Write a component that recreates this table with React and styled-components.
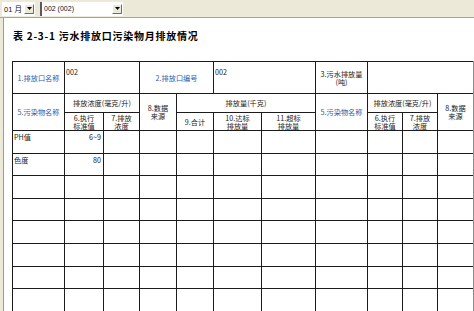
import React from "react";
import styled, { createGlobalStyle } from "styled-components";

const Global = createGlobalStyle`
  html, body { margin: 0; padding: 0; overflow: hidden; background: #ece9d8; }
  body { font-family: "Noto Sans CJK SC", "Noto Sans", sans-serif; }
`;

const Page = styled.div`
  width: 474px;
  height: 311px;
  display: flex;
  flex-direction: column;
  overflow: hidden;
`;

const Toolbar = styled.div`
  height: 17px;
  flex: 0 0 17px;
  background: #ece9d8;
  border-bottom: 1px solid #a9a794;
  display: flex;
  align-items: center;
  gap: 5px;
  padding-left: 2px;
`;

const Field = styled.div`
  width: ${(p) => p.$w}px;
  height: 14px;
  box-sizing: border-box;
  background: #fff;
  display: flex;
  align-items: center;
  justify-content: space-between;
  padding: 0 1px 0 2px;
  border-left: ${(p) => (p.$bar ? "2px solid #5a5a5a" : "none")};
  font-family: "Liberation Sans", "Noto Sans CJK SC", sans-serif;
  font-size: 7px;
  color: #111;
`;

const FieldText = styled.span`
  white-space: pre;
  font-size: ${(p) => p.$size || 7}px;
`;

const DropBtn = styled.div`
  width: 10px;
  height: 10px;
  box-sizing: border-box;
  background: #ece9d8;
  border: 1px solid;
  border-color: #fff #716f64 #716f64 #fff;
  display: flex;
  align-items: center;
  justify-content: center;
`;

const Workspace = styled.div`
  flex: 1;
  display: flex;
  background: #ece9d8;
  padding-left: 3px;
  min-height: 0;
`;

const Sheet = styled.div`
  flex: 1;
  background: #fff;
  border-left: 1px solid #9a9a9a;
  padding-left: 8px;
  overflow: hidden;
`;

const Title = styled.h1`
  margin: 12px 0 19px 1px;
  font-size: 10px;
  line-height: 12px;
  letter-spacing: 0.75px;
  font-weight: bold;
  color: #000;
  font-family: "Noto Sans CJK SC", sans-serif;
  white-space: pre;
`;

const Grid = styled.div`
  display: grid;
  width: max-content;
  grid-template-columns: 51px 38px 35px 36px 36px 47px 53px 51px 34px 34px 35px;
  grid-template-rows: 31px 18px 17px 22px 21px 22px 21px 22px 22px 21px 22px 22px;
  gap: 1px;
  background: #1c1c1c;
  padding: 1px 0 1px 1px;
  border-right: 1px solid #8c8c8c;
`;

const Cell = styled.div`
  background: #fff;
  grid-column: ${(p) => p.$col || "auto"};
  grid-row: ${(p) => p.$row || "auto"};
  display: flex;
  flex-direction: column;
  justify-content: ${(p) => (p.$top ? "flex-start" : "center")};
  align-items: ${(p) =>
    p.$align === "right" ? "flex-end" : p.$align === "left" ? "flex-start" : "center"};
  text-align: ${(p) => p.$align || "center"};
  padding: ${(p) => p.$pad || "0"};
  font-family: "Noto Sans CJK SC", sans-serif;
  font-size: 7.2px;
  line-height: 8px;
  color: ${(p) => (p.$blue ? "#2d5ca8" : "#1a1a1a")};
  white-space: nowrap;
  overflow: hidden;
`;

const Arrow = () => (
  <svg width="5" height="3" viewBox="0 0 5 3">
    <path d="M0 0h5L2.5 3z" fill="#000" />
  </svg>
);

const dataRows = [
  ["PH值", "6~9"],
  ["色度", "80"],
  ["", ""],
  ["", ""],
  ["", ""],
  ["", ""],
  ["", ""],
  ["", ""],
  ["", ""],
];

export default function App() {
  return (
    <Page>
      <Global />
      <Toolbar>
        <Field $w={33}>
          <FieldText $size={7.5}>01 月</FieldText>
          <DropBtn>
            <Arrow />
          </DropBtn>
        </Field>
        <Field $w={83} $bar>
          <FieldText>002 (002)</FieldText>
          <DropBtn>
            <Arrow />
          </DropBtn>
        </Field>
      </Toolbar>
      <Workspace>
        <Sheet>
          <Title>表 2-3-1 污水排放口污染物月排放情况</Title>
          <Grid>
            <Cell $blue>1.排放口名称</Cell>
            <Cell $col="span 2" $top $align="left" $pad="6px 0 0 1px">002</Cell>
            <Cell $col="span 2" $blue>2.排放口编号</Cell>
            <Cell $col="span 2" $top $align="left" $pad="6px 0 0 1px">002</Cell>
            <Cell>3.污水排放量<br />(吨)</Cell>
            <Cell $col="span 3" />

            <Cell $row="span 2" $blue>5.污染物名称</Cell>
            <Cell $col="span 2">排放浓度(毫克/升)</Cell>
            <Cell $row="span 2">8.数据<br />来源</Cell>
            <Cell $col="span 3">排放量(千克)</Cell>
            <Cell $row="span 2" $blue>5.污染物名称</Cell>
            <Cell $col="span 2">排放浓度(毫克/升)</Cell>
            <Cell $row="span 2">8.数据<br />来源</Cell>

            <Cell>6.执行<br />标准值</Cell>
            <Cell>7.排放<br />浓度</Cell>
            <Cell>9.合计</Cell>
            <Cell>10.达标<br />排放量</Cell>
            <Cell>11.超标<br />排放量</Cell>
            <Cell>6.执行<br />标准值</Cell>
            <Cell>7.排放<br />浓度</Cell>

            {dataRows.map(([name, std], i) => (
              <React.Fragment key={i}>
                <Cell $top $align="left" $pad="2px 0 0 1px">{name}</Cell>
                <Cell $top $align="right" $pad="2px 2px 0 0">{std}</Cell>
                {Array.from({ length: 9 }).map((_, j) => (
                  <Cell key={j} />
                ))}
              </React.Fragment>
            ))}
          </Grid>
        </Sheet>
      </Workspace>
    </Page>
  );
}
